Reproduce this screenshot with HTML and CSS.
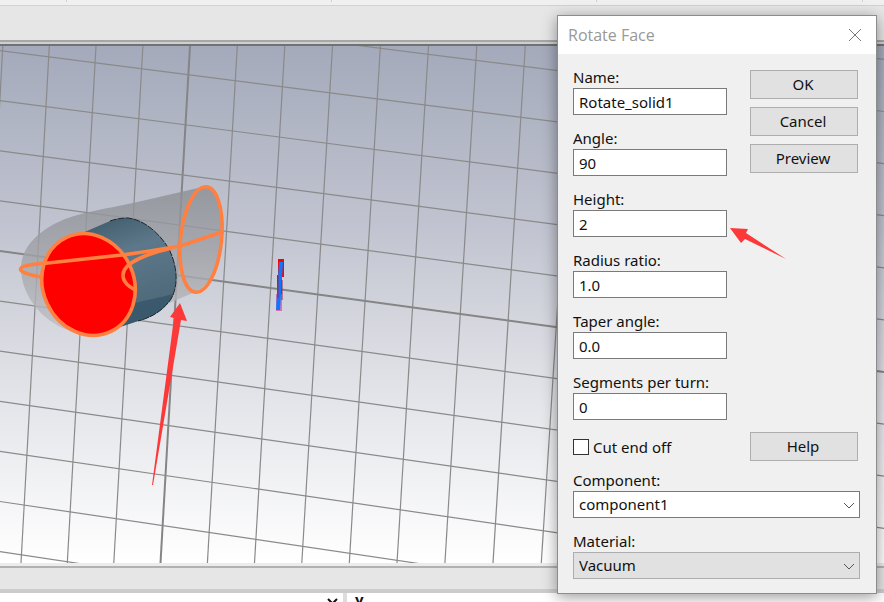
FILE: index.html
```html
<!DOCTYPE html>
<html lang="en">
<head>
    <meta charset="utf-8">
    <title>Rotate Face</title>
    <link rel="stylesheet" href="styles.css">
    <script src="grid.js" defer></script>
</head>
<body>
    <div class="ribbon">
        <span></span><span></span><span></span><span></span>
    </div>
    <div class="tabs"></div>

    <div class="viewport">
        <svg class="scene" viewBox="0 46 884 517" preserveAspectRatio="xMinYMin slice">
            <defs>
                <linearGradient id="sweep" x1="0" y1="0" x2="0" y2="1">
                    <stop offset="0" stop-color="#8c8e94"/>
                    <stop offset="0.5" stop-color="#a2a3a8"/>
                    <stop offset="1" stop-color="#bebec2"/>
                </linearGradient>
                <linearGradient id="steel" x1="0" y1="0" x2="0.3" y2="1">
                    <stop offset="0" stop-color="#3d5868"/>
                    <stop offset="0.4" stop-color="#5c788a"/>
                    <stop offset="1" stop-color="#4d6878"/>
                </linearGradient>
            </defs>

            <g id="grid"></g>

            <!-- swept body -->
            <path fill="url(#sweep)" fill-opacity="0.8" d="M207 186 L133 203 C105 209 88 211 65 219 C43 228 20 245 21 270 C22 296 42 321 68 330 L130 320 L195 292 C210 288 222 258 222 230 C222 205 215 186 207 186Z"/>

            <!-- solid cylinder -->
            <path fill="url(#steel)" d="M80 234 L110 221 Q118 218 128 218 C145 220 160 234 169 249 C177 265 179 285 171 299 C163 311 150 318 138 321 L120 327Z"/>
            <path fill="#345469" fill-opacity="0.75" d="M130 304 L174 294 C167 308 154 317 138 321 L120 327Z"/>
            <path fill="none" stroke="#1c2830" stroke-width="1" stroke-dasharray="7 1" d="M110 221 Q118 218 128 218 C145 220 160 234 169 249 C177 265 179 285 171 299 C163 311 150 318 138 321"/>

            <!-- picked face and path curves -->
            <ellipse cx="88.500" cy="284.500" rx="45" ry="52" transform="rotate(-25 88.5 284.5)" fill="#f00"/>
            <g fill="none" stroke="#ff8040" stroke-width="3.6" stroke-linecap="round" stroke-linejoin="round">
                <ellipse cx="88.500" cy="284.500" rx="45.500" ry="52" transform="rotate(-25 88.5 284.5)"/>
                <ellipse cx="201" cy="239.500" rx="20.500" ry="53" transform="rotate(6 201 239.5)"/>
                <path d="M41 277 C30 275 20 272 20.500 269 C21 265 36 264 48 263 L122 255 Q152 251 180 246 L222 232"/>
                <path d="M172 248 C150 253 123 262 123 275 C123 283 130 287 135 290"/>
            </g>

            <!-- working axes seen edge-on -->
            <path fill="#f00" d="M278 259h6v18h-2v20h-5v-22h1z"/>
            <path stroke="#d872b0" stroke-width="6" d="M279 294v17"/>
            <path stroke="#0a78ff" stroke-width="4" d="M281 262L278 310"/>
            <path stroke="#a02050" stroke-width="1" d="M278 276v22M282 280v20"/>

            <path fill="#fc3838" d="M180 303 L187 321 L181 320 L153 485 L152 485 L174 318 L170 317Z"/>
        </svg>
    </div>

    <div class="splitter"></div>
    <div class="panels">
        <div class="panel tree">
            <svg width="11" height="11" viewBox="0 0 11 11"><path d="M1 1L10 10M10 1L1 10" stroke="#111" stroke-width="2"/></svg>
        </div>
        <div class="panel messages">y</div>
    </div>

    <form class="dialog">
        <div class="titlebar">
            <span>Rotate Face</span>
            <button type="button" class="close" aria-label="Close">
                <svg width="14" height="14" viewBox="0 0 14 14"><path d="M1 1L13 13M13 1L1 13" stroke="#777" fill="none"/></svg>
            </button>
        </div>
        <div class="content">
            <div class="upper">
                <div class="fields">
                    <label for="name">Name:</label>
                    <input type="text" id="name" value="Rotate_solid1">
                    <label for="angle">Angle:</label>
                    <input type="text" id="angle" value="90">
                    <label for="height">Height:</label>
                    <input type="text" id="height" value="2">
                    <label for="ratio">Radius ratio:</label>
                    <input type="text" id="ratio" value="1.0">
                    <label for="taper">Taper angle:</label>
                    <input type="text" id="taper" value="0.0">
                    <label for="segments">Segments per turn:</label>
                    <input type="text" id="segments" value="0">
                </div>
                <div class="buttons">
                    <button type="button">OK</button>
                    <button type="button">Cancel</button>
                    <button type="button">Preview</button>
                </div>
            </div>
            <div class="options">
                <input type="checkbox" id="cut">
                <label for="cut">Cut end off</label>
                <button type="button">Help</button>
            </div>
            <label for="component">Component:</label>
            <div class="combo">
                <select id="component"><option>component1</option></select>
                <svg width="12" height="8" viewBox="0 0 12 8"><path d="M1 1L6 6L11 1"/></svg>
            </div>
            <label for="material">Material:</label>
            <div class="combo grey">
                <select id="material"><option>Vacuum</option></select>
                <svg width="12" height="8" viewBox="0 0 12 8"><path d="M1 1L6 6L11 1"/></svg>
            </div>
        </div>
        <svg class="pointer" width="56" height="32" viewBox="0 0 56 32"><path fill="#fc3838" d="M0 0L18 1L16 5L56 31L15 11L11 15Z"/></svg>
    </form>
</body>
</html>
```
FILE: styles.css
```css
* {
	box-sizing: border-box;
}

body {
	margin: 0;
	height: 100vh;
	display: flex;
	flex-direction: column;
	overflow: hidden;
	position: relative;
	background: #e6e6e6;
	font-family: "Noto Sans", sans-serif;
	font-size: 15px;
	color: #111;
}

.ribbon {
	flex: none;
	height: 6px;
	display: flex;
	background: #f0f0f0;
	border-bottom: 1px solid #d2d2d2;
}

.ribbon span {
	width: 30%;
	height: 2px;
	border-right: 1px solid #d0d0d0;
}

.ribbon span:first-child {
	width: 67px;
}

.tabs {
	flex: none;
	height: 38px;
	border-bottom: 2px solid #cfcfcf;
	box-shadow: inset 0 -2px #a6a6a6;
}

.viewport {
	flex: 1;
	min-height: 0;
	overflow: hidden;
	border-top: 2px solid #727272;
	background: linear-gradient(#a4aabb, #c1c4d0 35%, #dedfe5 62%, #fff);
}

.scene {
	display: block;
	width: 100%;
	height: 100%;
}

.grid-line {
	stroke: #8a8a8a;
	stroke-width: 1.2;
}

.axis {
	stroke: #858585;
	stroke-width: 2;
}

.splitter {
	flex: none;
	height: 30px;
	border-top: 3px solid #ececec;
	border-bottom: 4px solid #ccc;
	box-shadow: inset 0 2px #b2b2b2;
}

.panels {
	flex: none;
	height: 9px;
	display: flex;
	gap: 4px;
	overflow: hidden;
	background: #ddd;
}

.panel {
	background: #fff;
	font-weight: bold;
	line-height: 12px;
}

.tree {
	width: 343px;
	padding: 5px 5px 0 0;
	display: flex;
	justify-content: flex-end;
}

.tree svg {
	flex: none;
}

.messages {
	flex: 1;
	padding-left: 8px;
}

.dialog {
	position: absolute;
	top: 15px;
	right: 7px;
	width: 320px;
	background: #f0f0f0;
	border: 1px solid #8c8c8c;
	box-shadow: 0 3px 14px rgba(0, 0, 0, 0.4);
}

.titlebar {
	height: 38px;
	padding: 0 14px 0 10px;
	display: flex;
	justify-content: space-between;
	align-items: center;
	background: #fff;
	color: #999;
	font-family: "Open Sans", sans-serif;
	font-size: 16px;
}

.close {
	display: flex;
	padding: 0;
	border: none;
	background: none;
}

.content {
	padding: 12px 16px 14px 15px;
}

.upper {
	display: flex;
	justify-content: space-between;
	padding-right: 2px;
}

.fields {
	width: 154px;
}

label {
	display: block;
	line-height: 22px;
}

input[type="text"] {
	display: block;
	width: 100%;
	height: 27px;
	margin-bottom: 12px;
	padding: 0 5px;
	border: 1px solid #7a7a7a;
	background: #fff;
	color: inherit;
	font: inherit;
}

.buttons {
	display: flex;
	flex-direction: column;
	gap: 8px;
	padding-top: 4px;
}

.buttons button,
.options button {
	width: 108px;
	height: 29px;
	padding: 0 2px 2px 0;
	border: 1px solid #adadad;
	background: #e1e1e1;
	color: inherit;
	font: inherit;
}

.options {
	display: flex;
	align-items: center;
	padding-right: 2px;
	margin-bottom: 8px;
}

.options button {
	margin-left: auto;
}

input[type="checkbox"] {
	appearance: none;
	width: 16px;
	height: 16px;
	margin: 0 4px 0 0;
	border: 1px solid #333;
	background: #fff;
}

.combo {
	position: relative;
	margin-bottom: 12px;
}

.combo:last-child {
	margin-bottom: 0;
}

select {
	appearance: none;
	display: block;
	width: 100%;
	height: 27px;
	padding: 0 5px 2px;
	border: 1px solid #7a7a7a;
	border-radius: 0;
	background: #fff;
	color: inherit;
	font: inherit;
}

.grey select {
	border-color: #adadad;
	background: #e1e1e1;
}

.combo svg {
	position: absolute;
	right: 5px;
	top: 11px;
	fill: none;
	stroke: #555;
	pointer-events: none;
}

.pointer {
	position: absolute;
	left: 172px;
	top: 212px;
}
```
FILE: grid.js
```javascript
const grid = document.getElementById('grid');

function addLine(x1, y1, x2, y2, axis) {
    const line = document.createElementNS('http://www.w3.org/2000/svg', 'line');
    line.setAttribute('x1', x1);
    line.setAttribute('y1', y1);
    line.setAttribute('x2', x2);
    line.setAttribute('y2', y2);
    line.setAttribute('class', axis ? 'axis' : 'grid-line');
    grid.appendChild(line);
}

// slight perspective, cells get wider to the right
for (let i = -4; i <= 15; i++) {
    const top = 190 + 47.2 * i + 0.1 * i * i;
    const bottom = 160.5 + 46.8 * i + 0.1 * i * i;
    addLine(top, 46, bottom, 563, i === 0);
}

for (let k = -6; k <= 6; k++) {
    addLine(0, 251 + 50.1 * k, 884, 372 + 52.1 * k, k === 0);
}
```
